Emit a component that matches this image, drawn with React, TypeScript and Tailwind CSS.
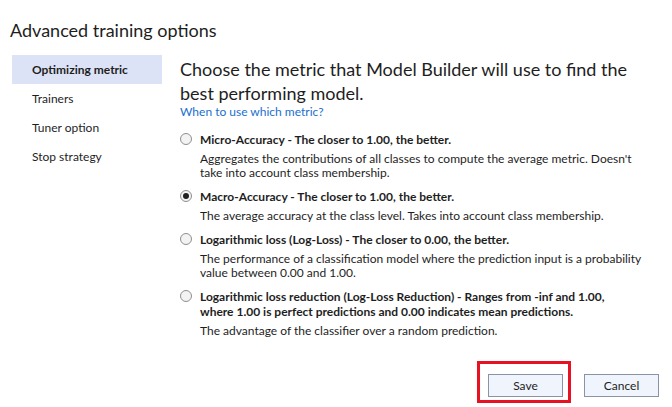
import React from "react";

const font = { fontFamily: 'Lato, "Noto Sans", sans-serif' };

function Radio({ checked }: { checked?: boolean }) {
  return (
    <span className="mt-[1.5px] flex h-[12px] w-[12px] shrink-0 items-center justify-center rounded-full border border-[#8f8f8f] bg-[#f3f3f3]">
      {checked && <span className="h-[6px] w-[6px] rounded-full bg-[#1f1f1f]" />}
    </span>
  );
}

const options: { label: React.ReactNode; desc: string; checked?: boolean }[] = [
  {
    label: "Micro-Accuracy - The closer to 1.00, the better.",
    desc: "Aggregates the contributions of all classes to compute the average metric. Doesn't take into account class membership.",
  },
  {
    label: "Macro-Accuracy - The closer to 1.00, the better.",
    desc: "The average accuracy at the class level. Takes into account class membership.",
    checked: true,
  },
  {
    label: "Logarithmic loss (Log-Loss) - The closer to 0.00, the better.",
    desc: "The performance of a classification model where the prediction input is a probability value between 0.00 and 1.00.",
  },
  {
    label: (
      <>
        Logarithmic loss reduction (Log-Loss Reduction) - Ranges from -inf and 1.00,
        <br />
        where 1.00 is perfect predictions and 0.00 indicates mean predictions.
      </>
    ),
    desc: "The advantage of the classifier over a random prediction.",
  },
];

export default function App() {
  return (
    <div className="flex h-[407px] w-[672px] flex-col bg-white text-[#1e1e1e]" style={font}>
      <div className="pl-[10px] pt-[18px] text-[18px] leading-[24px]">Advanced training options</div>
      <div className="mt-[13px] flex">
        <div className="ml-[12px] flex w-[150px] flex-col text-[12px]">
          <div className="flex h-[29px] items-center bg-[#dde3f6] pl-[20px] font-bold">Optimizing metric</div>
          <div className="flex h-[29px] items-center pl-[20px]">Trainers</div>
          <div className="flex h-[29px] items-center pl-[20px]">Tuner option</div>
          <div className="flex h-[29px] items-center pl-[20px]">Stop strategy</div>
        </div>
        <div className="ml-[18px] flex w-[470px] flex-col">
          <div className="mt-[2px] text-[18px] leading-[24px]">
            Choose the metric that Model Builder will use to find the best performing model.
          </div>
          <div className="text-[12px] leading-[14px] text-[#1a6fcf]">When to use which metric?</div>
          <div className="mt-[12.5px] flex flex-col gap-[9px]">
            {options.map((o, i) => (
              <div key={i} className="flex gap-[8px]">
                <Radio checked={o.checked} />
                <div className="flex flex-col">
                  <div className="text-[12px] font-bold leading-[15px]">{o.label}</div>
                  <div className="mt-[5px] text-[12px] leading-[14px]">{o.desc}</div>
                </div>
              </div>
            ))}
          </div>
        </div>
      </div>
      <div className="mb-[4px] mt-auto flex items-end justify-end gap-[13px] pr-[13px]">
        <div className="border-[3px] border-[#e81123] pb-[3px] pl-[8px] pr-[5px] pt-[8px]">
          <button className="h-[23px] w-[75px] border border-[#8a93a6] bg-[#f0f4fc] text-[12px]">Save</button>
        </div>
        <button className="mb-[6px] h-[23px] w-[75px] border border-[#8a93a6] bg-[#f0f4fc] text-[12px]">Cancel</button>
      </div>
    </div>
  );
}
